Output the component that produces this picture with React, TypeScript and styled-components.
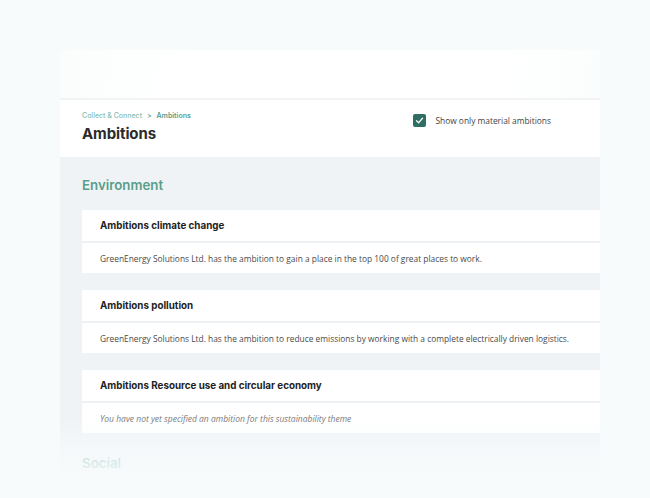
import { createGlobalStyle } from "styled-components";
import styled from "styled-components";

const GlobalStyle = createGlobalStyle`
  html, body {
    margin: 0;
    padding: 0;
    background: #f7fbfc;
    overflow: hidden;
  }
  * {
    box-sizing: border-box;
  }
`;

type Ambition = {
  title: string;
  text?: string;
};

const environment: Ambition[] = [
  {
    title: "Ambitions climate change",
    text: "GreenEnergy Solutions Ltd. has the ambition to gain a place in the top 100 of great places to work.",
  },
  {
    title: "Ambitions pollution",
    text: "GreenEnergy Solutions Ltd. has the ambition to reduce emissions by working with a complete electrically driven logistics.",
  },
  {
    title: "Ambitions Resource use and circular economy",
  },
];

export default function App() {
  return (
    <>
      <GlobalStyle />
      <Page>
        <Frame>
          <TopBar />
          <Header>
            <TitleBlock>
              <Breadcrumb>
                Collect &amp; Connect <Sep>&gt;</Sep> <Current>Ambitions</Current>
              </Breadcrumb>
              <PageTitle>Ambitions</PageTitle>
            </TitleBlock>
            <Toggle>
              <Checkbox>
                <svg width="9" height="9" viewBox="0 0 12 12" fill="none">
                  <path
                    d="M2 6.3 L4.8 9 L10 3"
                    stroke="#ffffff"
                    strokeWidth="1.6"
                    strokeLinecap="round"
                    strokeLinejoin="round"
                  />
                </svg>
              </Checkbox>
              <ToggleLabel>Show only material ambitions</ToggleLabel>
            </Toggle>
          </Header>
          <Content>
            <SectionTitle>Environment</SectionTitle>
            {environment.map((a) => (
              <Card key={a.title}>
                <CardHead>{a.title}</CardHead>
                <CardBody $empty={!a.text}>
                  {a.text ??
                    "You have not yet specified an ambition for this sustainability theme"}
                </CardBody>
              </Card>
            ))}
            <SectionTitle $next>Social</SectionTitle>
          </Content>
          <Fade />
        </Frame>
      </Page>
    </>
  );
}

const Page = styled.div`
  width: 650px;
  height: 498px;
  padding: 50px 50px 0 60px;
  overflow: hidden;
`;

const Frame = styled.div`
  position: relative;
  width: 540px;
  height: 448px;
  background: #eff3f6;
  overflow: hidden;
  font-family: "Open Sans", "Noto Sans", sans-serif;
`;

const TopBar = styled.div`
  height: 50px;
  background: linear-gradient(100deg, #fbfdfd 0%, #ffffff 25%, #ffffff 80%, #fbfdfd 100%);
  border-bottom: 2px solid #f1f3f4;
`;

const Header = styled.div`
  height: 57px;
  background: #ffffff;
  display: flex;
  justify-content: space-between;
  align-items: flex-start;
  padding: 0 49px 0 22px;
`;

const TitleBlock = styled.div`
  display: flex;
  flex-direction: column;
  padding-top: 11px;
`;

const Breadcrumb = styled.div`
  font-family: "Inter", sans-serif;
  font-size: 7px;
  font-weight: 500;
  line-height: 9px;
  color: #8cbdae;
`;

const Sep = styled.span`
  margin: 0 3px;
  color: #6aa593;
`;

const Current = styled.span`
  color: #5a9e8a;
  font-weight: 600;
`;

const PageTitle = styled.h1`
  margin: 4px 0 0;
  font-family: "Inter", sans-serif;
  font-size: 15px;
  font-weight: 700;
  line-height: 20px;
  color: #2b2b2b;
  letter-spacing: -0.1px;
`;

const Toggle = styled.div`
  display: flex;
  align-items: center;
  gap: 9px;
  padding-top: 14px;
`;

const Checkbox = styled.span`
  width: 13px;
  height: 13px;
  border-radius: 2px;
  background: #2f6f63;
  display: flex;
  align-items: center;
  justify-content: center;
`;

const ToggleLabel = styled.span`
  font-size: 8.4px;
  color: #444444;
  line-height: 12px;
`;

const Content = styled.div`
  padding: 0 0 0 22px;
`;

const SectionTitle = styled.h2<{ $next?: boolean }>`
  margin: ${(p) => (p.$next ? "22px 0 0" : "20px 0 17px")};
  font-family: "Inter", sans-serif;
  font-size: 13.3px;
  font-weight: 600;
  line-height: 16px;
  color: #5a9e8a;
`;

const Card = styled.div`
  background: #ffffff;
  margin-bottom: 17px;
`;

const CardHead = styled.div`
  height: 33px;
  display: flex;
  align-items: center;
  padding-left: 18px;
  font-family: "Inter", sans-serif;
  font-size: 9.8px;
  font-weight: 700;
  color: #1e1e1e;
  border-bottom: 2px solid #eef2f5;
`;

const CardBody = styled.div<{ $empty?: boolean }>`
  height: 30px;
  display: flex;
  align-items: center;
  padding-left: 18px;
  font-size: ${(p) => (p.$empty ? "8.5px" : "8.4px")};
  color: ${(p) => (p.$empty ? "#777777" : "#4a4a4a")};
  font-style: ${(p) => (p.$empty ? "italic" : "normal")};
  white-space: nowrap;
`;

const Fade = styled.div`
  position: absolute;
  left: 0;
  right: 0;
  bottom: 0;
  height: 80px;
  pointer-events: none;
  background: linear-gradient(
    to bottom,
    rgba(247, 251, 252, 0) 0%,
    rgba(247, 251, 252, 0.7) 40%,
    rgba(247, 251, 252, 0.95) 75%,
    #f7fbfc 100%
  );
`;
